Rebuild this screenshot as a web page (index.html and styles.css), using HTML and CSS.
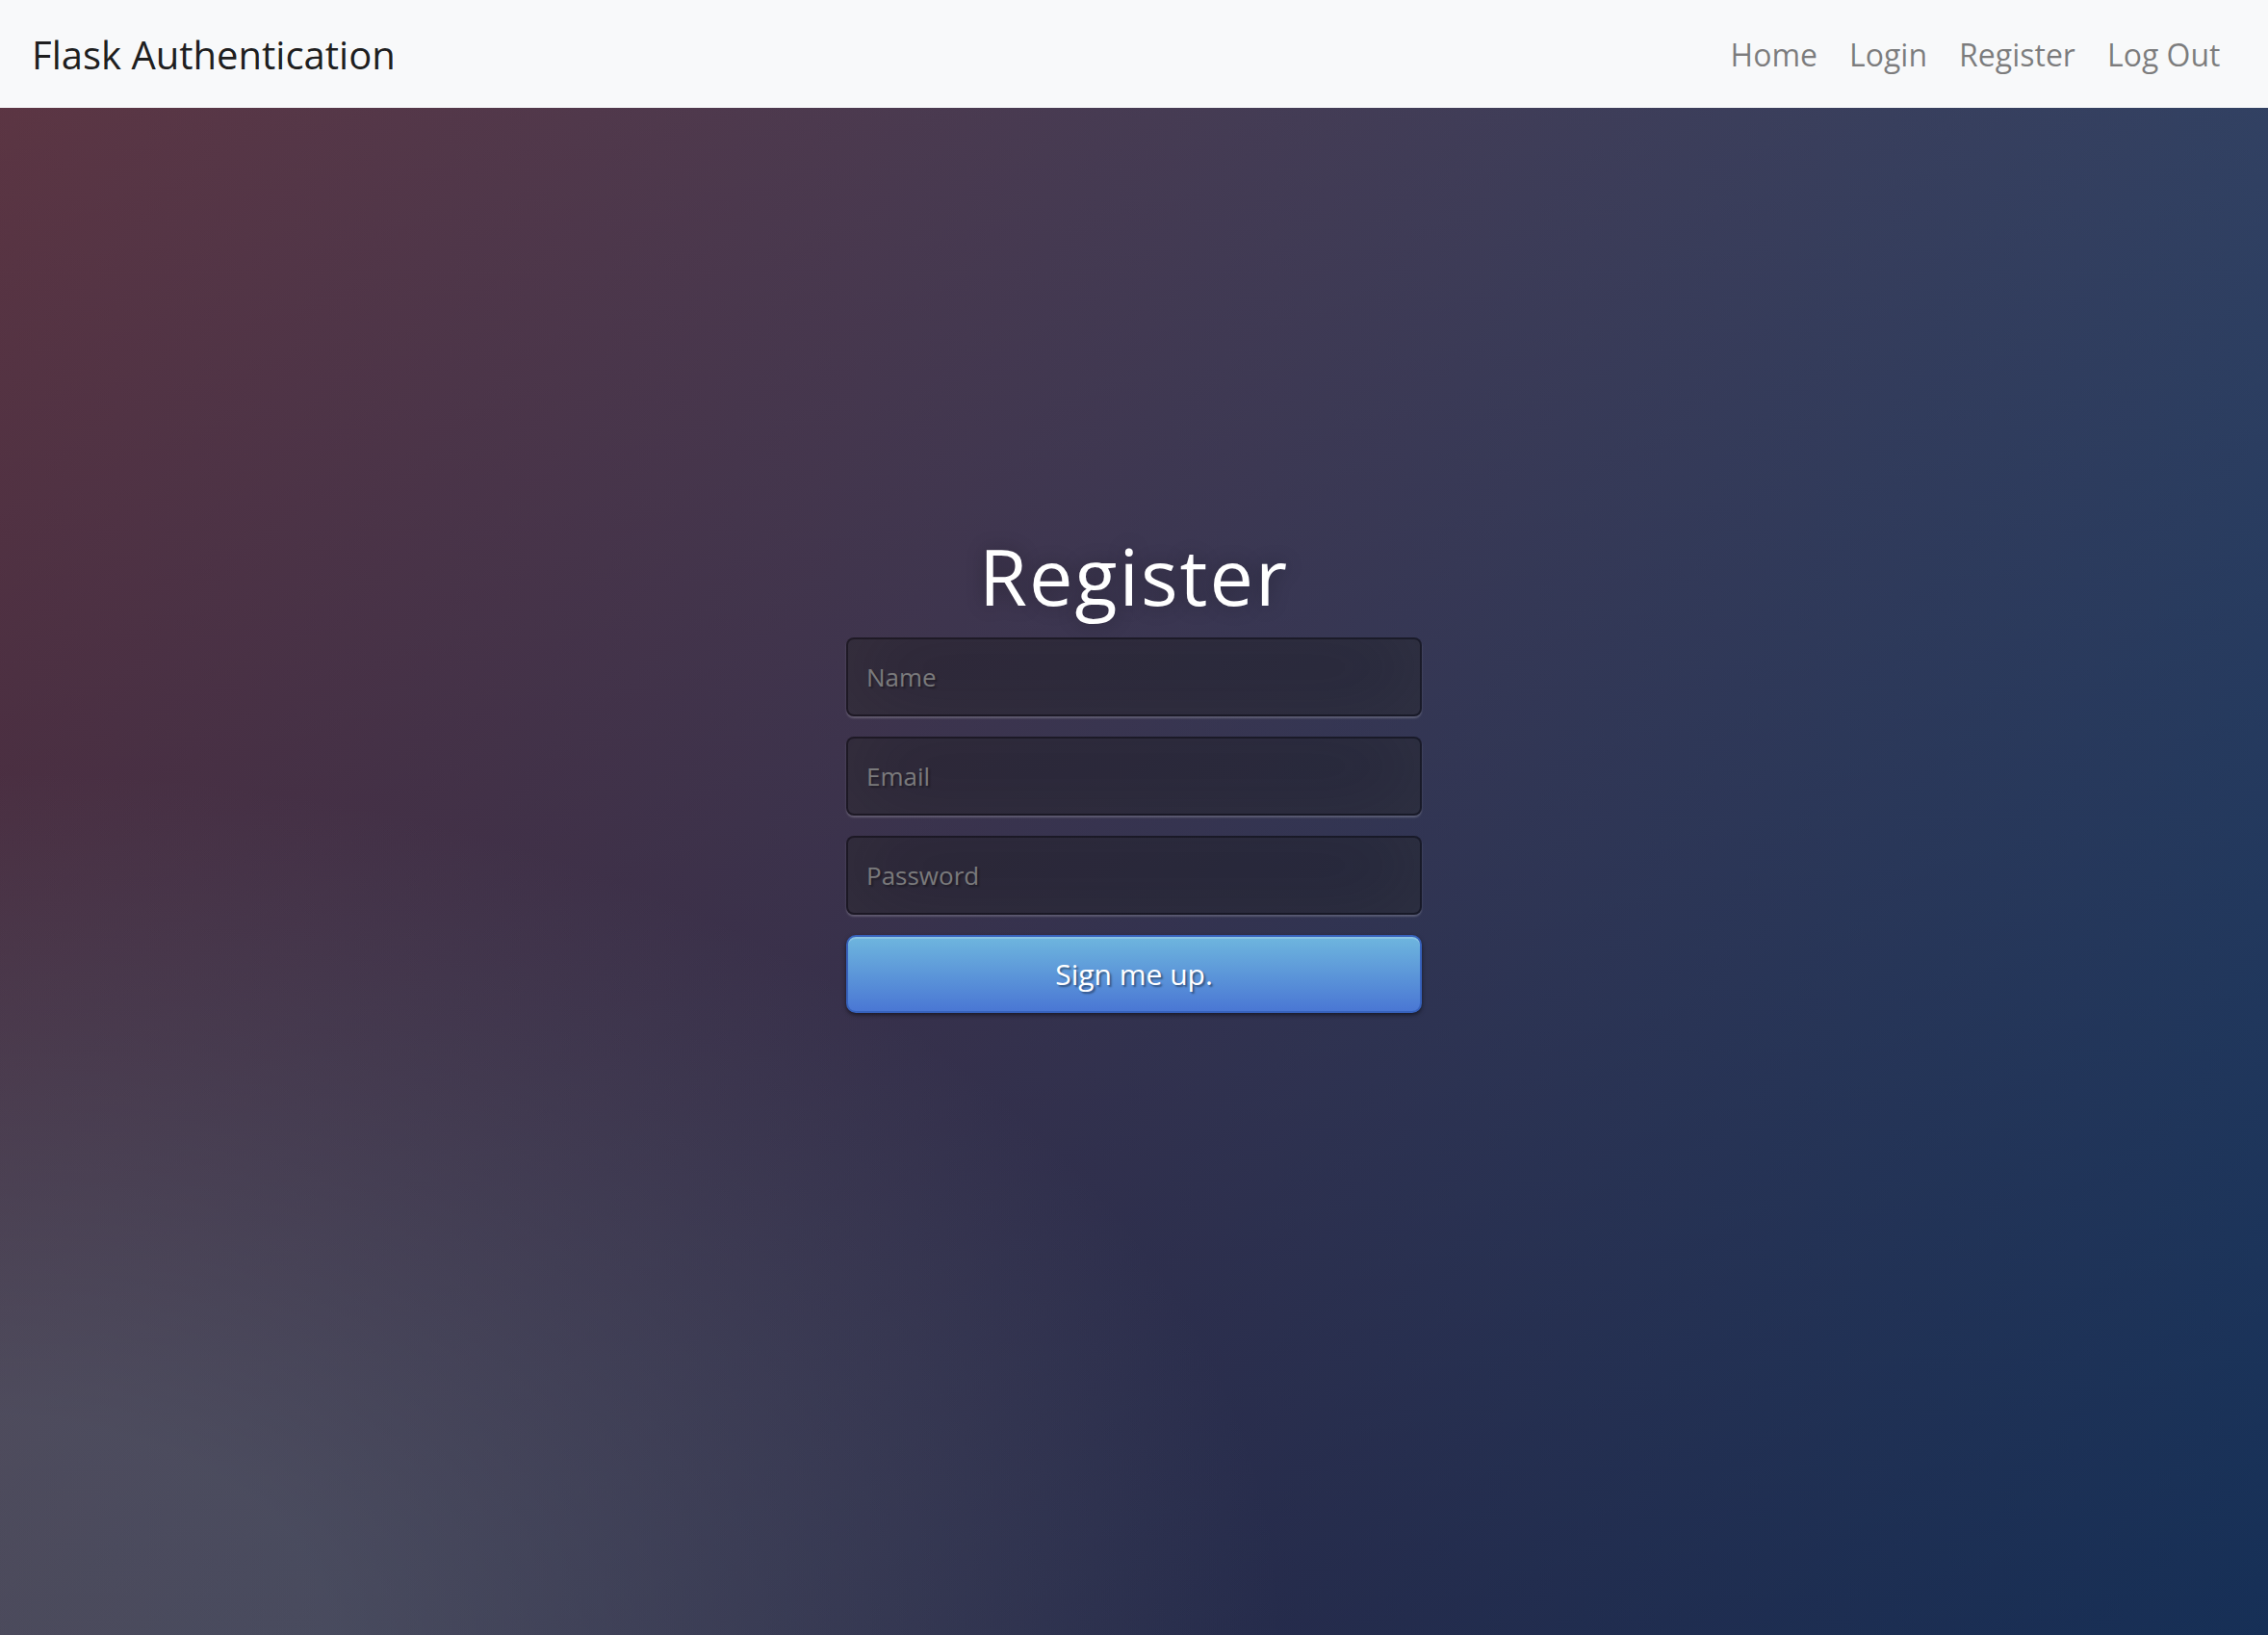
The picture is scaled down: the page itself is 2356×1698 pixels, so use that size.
FILE: index.html
```html
<!DOCTYPE html>
<html lang="en">
<head>
<meta charset="utf-8">
<title>Flask Authentication</title>
<link rel="stylesheet" href="styles.css">
</head>
<body>
<nav class="navbar">
  <a class="brand" href="#">Flask Authentication</a>
  <ul class="nav">
    <li><a class="nav-link" href="#">Home</a></li>
    <li><a class="nav-link" href="#">Login</a></li>
    <li><a class="nav-link" href="#">Register</a></li>
    <li><a class="nav-link" href="#">Log Out</a></li>
  </ul>
</nav>
<main class="page">
  <div class="login">
    <h1 class="title">Register</h1>
    <form class="form">
      <input class="field" type="text" name="name" placeholder="Name">
      <input class="field" type="email" name="email" placeholder="Email">
      <input class="field" type="password" name="password" placeholder="Password">
      <button class="btn" type="submit">Sign me up.</button>
    </form>
  </div>
</main>
</body>
</html>
```
FILE: styles.css
```css
* { box-sizing: border-box; }
html, body { margin: 0; padding: 0; height: 100%; }
body {
  font-family: "Open Sans", "Liberation Sans", sans-serif;
  display: flex;
  flex-direction: column;
  min-height: 100vh;
}
.navbar {
  height: 112px;
  flex: 0 0 112px;
  background: #f8f9fa;
  display: flex;
  align-items: center;
  justify-content: space-between;
  padding: 0 33px 0 33px;
}
.brand {
  font-size: 40px;
  line-height: normal;
  color: rgba(0,0,0,0.9);
  text-decoration: none;
}
.nav {
  list-style: none;
  margin: 0;
  padding: 0;
  display: flex;
}
.nav-link {
  display: block;
  padding: 0 16.5px;
  font-size: 32px;
  line-height: normal;
  color: rgba(0,0,0,0.5);
  text-decoration: none;
}
.page {
  flex: 1;
  display: flex;
  justify-content: center;
  padding-top: 437px;
  background:
    radial-gradient(ellipse farthest-corner at 0% 100%, rgba(104,128,138,0.4) 10%, rgba(138,114,76,0) 40%),
    linear-gradient(to bottom, rgba(57,173,219,0.25) 0%, rgba(42,60,87,0.4) 100%),
    linear-gradient(135deg, #670d10 0%, #092756 100%);
}
.login {
  width: 598px;
}
.title {
  margin: 0 0 16px;
  font-size: 81px;
  font-weight: 400;
  line-height: 1.2;
  letter-spacing: 2px;
  text-align: center;
  color: #fff;
  text-shadow: 0 0 20px rgba(0,0,0,0.3);
}
.form {
  display: flex;
  flex-direction: column;
}
.field {
  width: 100%;
  height: 82px;
  margin: 0 0 21px;
  padding: 0 19px;
  font-family: inherit;
  font-size: 26px;
  color: #fff;
  background: rgba(0,0,0,0.3);
  border: 2px solid rgba(0,0,0,0.3);
  border-radius: 8px;
  outline: none;
  text-shadow: 2px 2px 2px rgba(0,0,0,0.3);
  box-shadow: inset 0 -10px 90px rgba(100,100,100,0.2), 0 2px 2px rgba(255,255,255,0.2);
}
.field::placeholder {
  color: #7a7a7c;
  opacity: 1;
}
.btn {
  width: 100%;
  height: 81px;
  padding: 0 28px;
  font-family: inherit;
  font-size: 30px;
  color: #fff;
  background-color: #4a77d4;
  background-image: linear-gradient(to bottom, #6eb6de, #4a77d4);
  border: 2px solid #3762bc;
  border-radius: 10px;
  text-shadow: 2px 2px 2px rgba(0,0,0,0.4);
  box-shadow: inset 0 2px 0 rgba(255,255,255,0.2), 0 2px 4px rgba(0,0,0,0.5);
  cursor: pointer;
}
```
